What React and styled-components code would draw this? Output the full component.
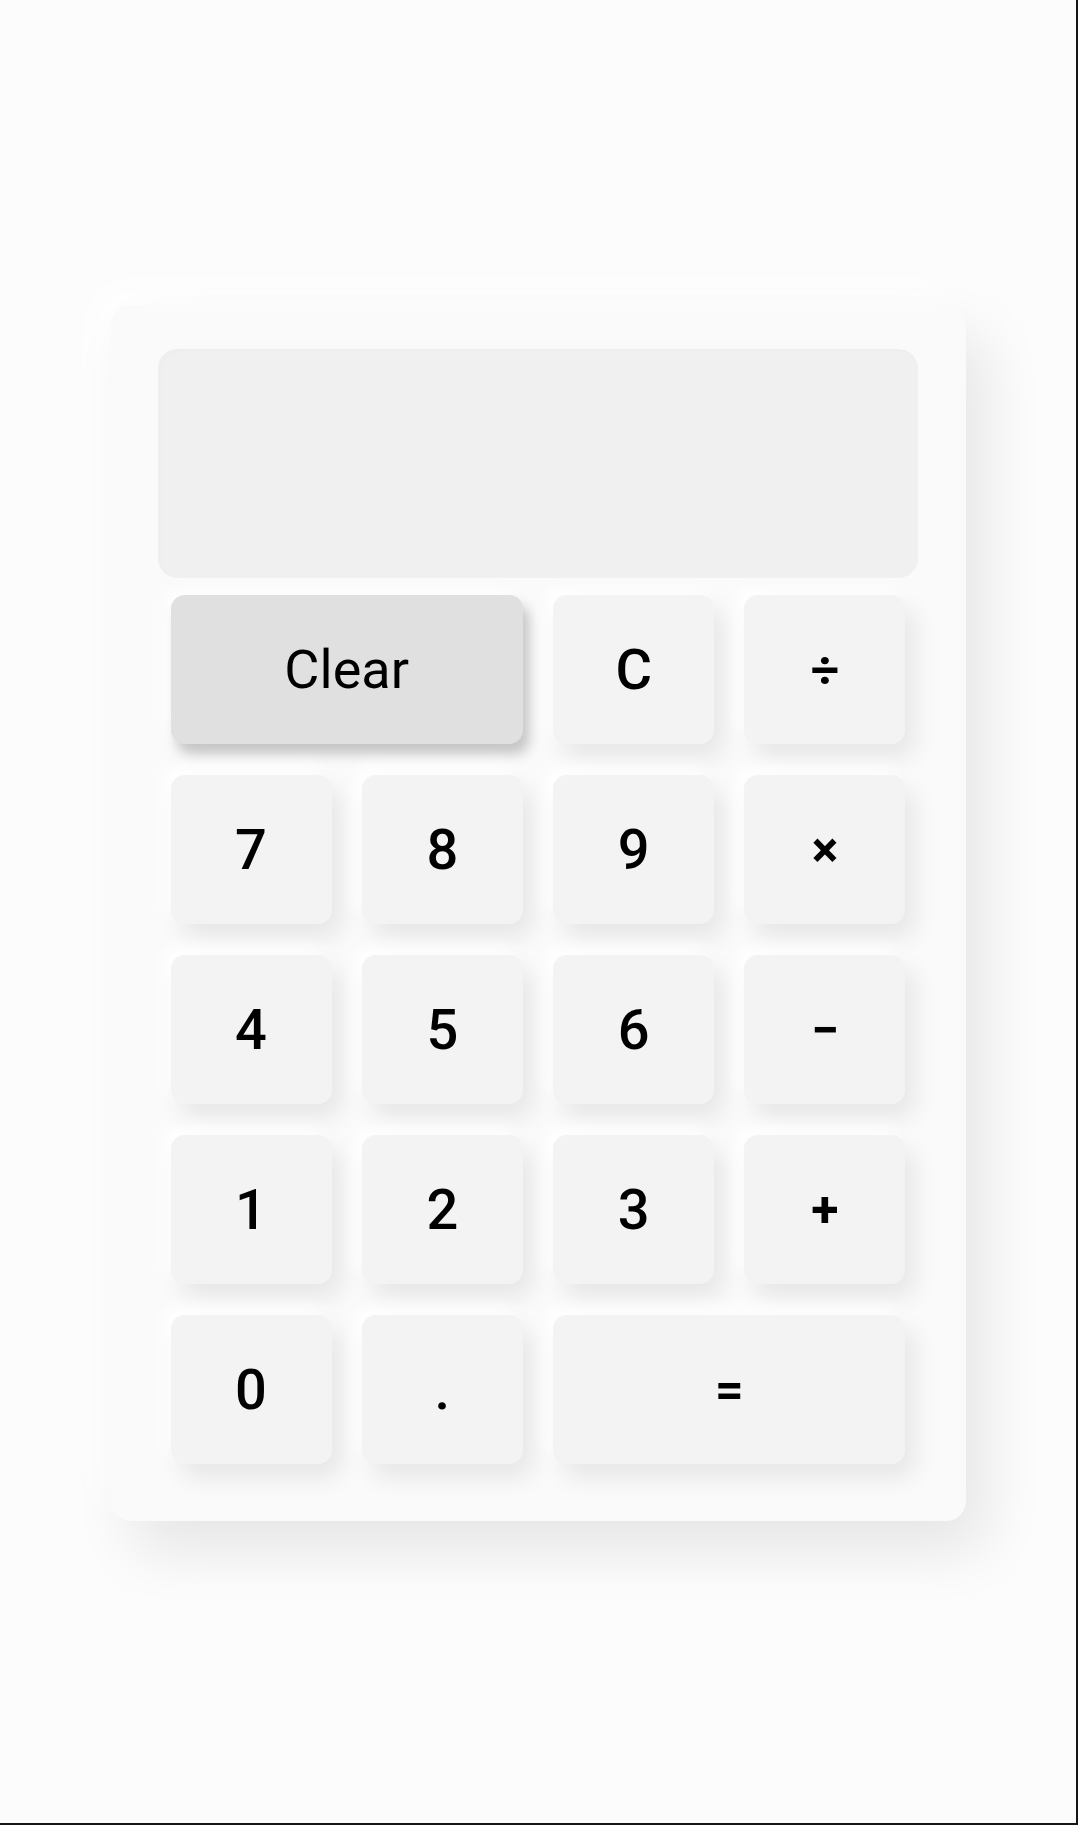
import styled, { createGlobalStyle, css } from "styled-components";

const GlobalStyle = createGlobalStyle`
  html, body {
    margin: 0;
    padding: 0;
  }
  body {
    font-family: Roboto, "Liberation Sans", sans-serif;
    background-color: #fcfcfc;
  }
  * {
    box-sizing: border-box;
  }
`;

const Page = styled.main`
  min-height: 100vh;
  display: flex;
  justify-content: center;
  align-items: center;
  padding-top: 3px;
  background-color: #fcfcfc;
  border-right: 2px solid #161616;
  border-bottom: 2px solid #161616;
`;

const Calculator = styled.div`
  width: 855px;
  padding: 44px 47.5px 57px;
  border-radius: 20px;
  background-color: #fafafa;
  box-shadow: 20px 30px 60px rgba(0, 0, 0, 0.09),
    -16px -16px 40px rgba(255, 255, 255, 0.95);
`;

const Display = styled.div`
  height: 229px;
  border-radius: 20px;
  background-color: #f0f0f0;
  box-shadow: inset 2px 2px 6px rgba(0, 0, 0, 0.015);
`;

const Keys = styled.div`
  margin: 17px 12.5px 0;
  display: grid;
  grid-template-columns: repeat(4, 161px);
  grid-auto-rows: 149px;
  column-gap: 30.33px;
  row-gap: 31px;
`;

const Key = styled.button`
  border: none;
  outline: none;
  border-radius: 14px;
  background-color: #f3f3f3;
  color: #000;
  font-family: Roboto, "Liberation Sans", sans-serif;
  font-size: 56px;
  font-weight: 500;
  display: flex;
  justify-content: center;
  align-items: center;
  padding: 0;
  cursor: pointer;
  box-shadow: 10px 14px 24px rgba(0, 0, 0, 0.08),
    -8px -8px 16px rgba(255, 255, 255, 0.95);
  ${(props) =>
    props.$span &&
    css`
      grid-column: span ${props.$span};
    `}
  ${(props) =>
    props.$op &&
    css`
      font-size: 50px;
      font-weight: 700;
    `}
  ${(props) =>
    props.$pressed &&
    css`
      background-color: #e0e0e0;
      font-weight: 400;
      font-size: 54px;
      box-shadow: 6px 10px 13px rgba(0, 0, 0, 0.22),
        -6px -6px 14px rgba(255, 255, 255, 0.9);
    `}
`;

const keys = [
  { label: "Clear", span: 2, pressed: true },
  { label: "C" },
  { label: "÷", op: true },
  { label: "7" },
  { label: "8" },
  { label: "9" },
  { label: "×", op: true },
  { label: "4" },
  { label: "5" },
  { label: "6" },
  { label: "−", op: true },
  { label: "1" },
  { label: "2" },
  { label: "3" },
  { label: "+", op: true },
  { label: "0" },
  { label: "." },
  { label: "=", span: 2, op: true },
];

function App() {
  return (
    <>
      <GlobalStyle />
      <Page>
        <Calculator>
          <Display />
          <Keys>
            {keys.map((k) => (
              <Key
                key={k.label}
                $span={k.span}
                $op={k.op}
                $pressed={k.pressed}
              >
                {k.label}
              </Key>
            ))}
          </Keys>
        </Calculator>
      </Page>
    </>
  );
}

export default App;
